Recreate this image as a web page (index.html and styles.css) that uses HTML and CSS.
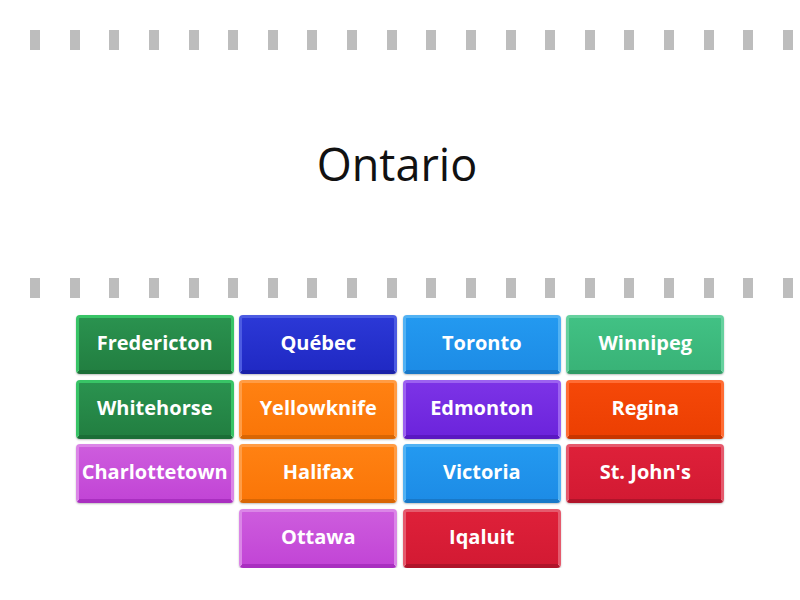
FILE: index.html
```html
<!DOCTYPE html>
<html lang="en">
<head>
    <meta charset="UTF-8">
    <meta name="viewport" content="width=device-width, initial-scale=1.0">
    <title>Match up</title>
    <link rel="stylesheet" href="styles.css">
</head>
<body>
    <div class="dashes top">
        <span></span><span></span><span></span><span></span><span></span>
        <span></span><span></span><span></span><span></span><span></span>
        <span></span><span></span><span></span><span></span><span></span>
        <span></span><span></span><span></span><span></span><span></span>
    </div>
    <div id="question">Ontario</div>
    <div class="dashes">
        <span></span><span></span><span></span><span></span><span></span>
        <span></span><span></span><span></span><span></span><span></span>
        <span></span><span></span><span></span><span></span><span></span>
        <span></span><span></span><span></span><span></span><span></span>
    </div>
    <div id="answers">
        <div class="tile green">Fredericton</div>
        <div class="tile navy">Québec</div>
        <div class="tile blue">Toronto</div>
        <div class="tile mint">Winnipeg</div>
        <div class="tile green">Whitehorse</div>
        <div class="tile orange">Yellowknife</div>
        <div class="tile purple">Edmonton</div>
        <div class="tile redorange">Regina</div>
        <div class="tile pink">Charlottetown</div>
        <div class="tile orange">Halifax</div>
        <div class="tile blue">Victoria</div>
        <div class="tile red">St. John's</div>
        <div class="tile empty"></div>
        <div class="tile pink">Ottawa</div>
        <div class="tile red">Iqaluit</div>
    </div>
</body>
</html>
```

FILE: styles.css
```css
body
{
    margin: 0;
    background-color: #ffffff;
    font-family: "Open Sans", "Liberation Sans", sans-serif;
}

.dashes
{
    display: flex;
    justify-content: space-between;
    padding: 0 7px 0 30px;
    height: 20px;
}
.dashes.top
{
    margin-top: 30px;
}
.dashes>span
{
    width: 10px;
    height: 20px;
    background-color: #bdbdbd;
}

#question
{
    height: 228px;
    display: flex;
    align-items: center;
    justify-content: center;
    font-size: 45px;
    color: #111111;
    padding: 0 6px 2px 0;
    box-sizing: border-box;
}

#answers
{
    display: grid;
    grid-template-columns: repeat(4, 158px);
    grid-auto-rows: 59px;
    column-gap: 5.5px;
    row-gap: 5.5px;
    justify-content: center;
    margin-top: 17px;
}

.tile
{
    box-sizing: border-box;
    display: flex;
    align-items: center;
    justify-content: center;
    padding-bottom: 3px;
    border: 3px solid;
    border-bottom-width: 4px;
    border-radius: 4px;
    color: #ffffff;
    font-size: 20px;
    font-weight: bold;
    white-space: nowrap;
    box-shadow: 0 1px 2px rgba(0, 0, 0, 0.25);
}
.tile.empty
{
    visibility: hidden;
}

.green
{
    background: linear-gradient(#2a924f, #227f41);
    border-color: #38c466 #38c466 #1b6e37;
}
.navy
{
    background: linear-gradient(#2b38d6, #2029c4);
    border-color: #4c5be2 #4c5be2 #1a22a8;
}
.blue
{
    background: linear-gradient(#2399f0, #1d8ce6);
    border-color: #52b2f3 #52b2f3 #1878c8;
}
.mint
{
    background: linear-gradient(#41c184, #39b377);
    border-color: #66d19e #66d19e #2f9a65;
}
.orange
{
    background: linear-gradient(#ff8112, #fa7608);
    border-color: #ff9c45 #ff9c45 #d96604;
}
.purple
{
    background: linear-gradient(#7c33e6, #6c24dc);
    border-color: #9c62f0 #9c62f0 #5a18c2;
}
.redorange
{
    background: linear-gradient(#f54808, #ec3f02);
    border-color: #ff6d35 #ff6d35 #c83500;
}
.pink
{
    background: linear-gradient(#cd5cdd, #c245d6);
    border-color: #db86e7 #db86e7 #a92fc0;
}
.red
{
    background: linear-gradient(#de2039, #d31a33);
    border-color: #e55a6d #e55a6d #b0142a;
}
```
